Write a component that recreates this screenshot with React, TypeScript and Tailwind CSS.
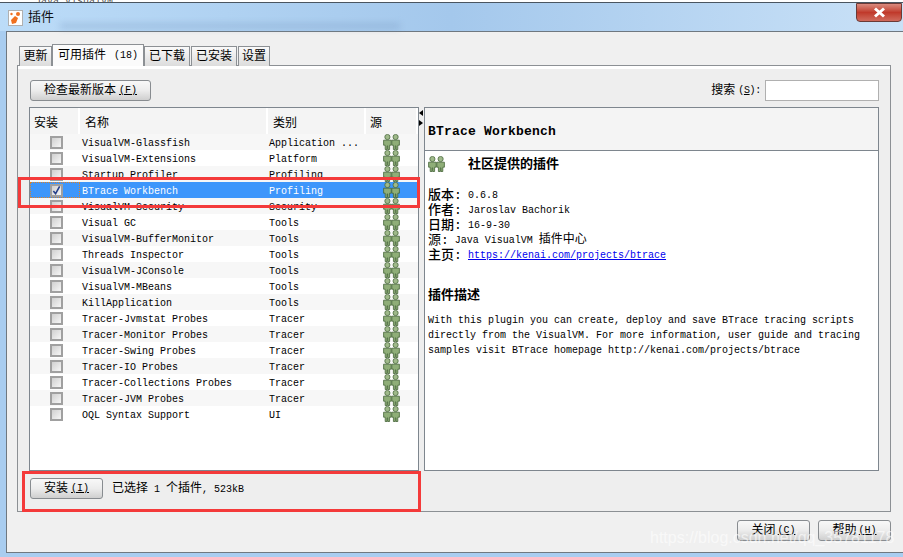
import React from "react";

const FONT = { fontFamily: '"Liberation Mono","Noto Sans CJK SC",monospace' };

function People({ className = "" }: { className?: string }) {
  const fig = (x: number) => (
    <g key={x}>
      <circle cx={x} cy={3} r={2.6} fill="#9fb98a" stroke="#4c6c40" strokeWidth={0.8} />
      <path
        d={`M${x - 3.8} 6.2 h7.6 v5 h-1.6 v4.3 h-1.9 v-3.6 h-0.6 v3.6 h-1.9 v-4.3 h-1.6 z`}
        fill="#8fae78"
        stroke="#456539"
        strokeWidth={0.8}
      />
    </g>
  );
  return (
    <svg width="17" height="16" viewBox="0 0 17 16" className={className}>
      {fig(4.4)}
      {fig(12.6)}
    </svg>
  );
}

function Check({ checked }: { checked?: boolean }) {
  return (
    <div className="relative h-[13px] w-[13px] border-2 border-[#a0a0a0] bg-gradient-to-br from-[#d0d0d0] to-[#f6f6f6]">
      {checked && (
        <svg viewBox="0 0 10 10" className="absolute left-0 top-0 h-[9px] w-[9px]">
          <path d="M1.5 5.5 L4 8.5 L8.5 0.5" fill="none" stroke="#27408b" strokeWidth="1.8" />
        </svg>
      )}
    </div>
  );
}

function Btn({ children, className = "" }: { children: React.ReactNode; className?: string }) {
  return (
    <div
      className={`flex h-[21px] items-center justify-center rounded-[3px] border border-[#888c90] bg-gradient-to-b from-[#f8f8f8] via-[#ececec] to-[#cfcfcf] text-[12px] text-black ${className}`}
    >
      {children}
    </div>
  );
}

const rows: [string, string][] = [
  ["VisualVM-Glassfish", "Application ..."],
  ["VisualVM-Extensions", "Platform"],
  ["Startup Profiler", "Profiling"],
  ["BTrace Workbench", "Profiling"],
  ["VisualVM-Security", "Security"],
  ["Visual GC", "Tools"],
  ["VisualVM-BufferMonitor", "Tools"],
  ["Threads Inspector", "Tools"],
  ["VisualVM-JConsole", "Tools"],
  ["VisualVM-MBeans", "Tools"],
  ["KillApplication", "Tools"],
  ["Tracer-Jvmstat Probes", "Tracer"],
  ["Tracer-Monitor Probes", "Tracer"],
  ["Tracer-Swing Probes", "Tracer"],
  ["Tracer-IO Probes", "Tracer"],
  ["Tracer-Collections Probes", "Tracer"],
  ["Tracer-JVM Probes", "Tracer"],
  ["OQL Syntax Support", "UI"],
];

function Tab({ label, className = "" }: { label: string; className?: string }) {
  return (
    <div
      className={`mt-[2px] flex h-[20px] items-center justify-center border border-b-0 border-[#8c9094] bg-gradient-to-b from-[#fafafa] to-[#dcdcdc] pt-[1px] text-[12px] ${className}`}
    >
      {label}
    </div>
  );
}

function Head({ label, className = "" }: { label: string; className?: string }) {
  return (
    <div className={`flex h-[26px] shrink-0 items-center border-r-2 border-white bg-[#f4f4f4] pt-[5px] text-[12px] ${className}`}>
      {label}
    </div>
  );
}

export default function App() {
  return (
    <div style={FONT} className="relative h-[557px] w-[903px] overflow-hidden bg-[#a9cdf0] text-black">
      {/* sliver of the window behind */}
      <div className="h-[2px] overflow-hidden bg-white pl-[35px] text-[10px] leading-[4px] text-[#555]">
        Java VisualVM
      </div>
      {/* title bar */}
      <div className="relative flex h-[29px] items-center border-t border-[#4a5560] bg-gradient-to-r from-[#bcdcf8] via-[#a4c8ec] to-[#c9e1f7] pl-[8px] pt-[2px]">
        <div className="flex h-[16px] w-[15px] items-center justify-center border border-[#b0b0b0] bg-white">
          <svg width="13" height="14" viewBox="0 0 13 14">
            <circle cx="9" cy="3" r="2" fill="#f07020" />
            <circle cx="2.5" cy="3" r="1.2" fill="#f07020" />
            <path d="M6 5 L9 7 L7 12 L3 13 L2 9 Z" fill="#f07020" />
          </svg>
        </div>
        <span className="ml-[5px] text-[13px] text-[#111]">插件</span>
        <div className="absolute bottom-[2px] left-[60px] h-[6px] w-[340px] bg-[#6f93b8]/30 blur-[3px]" />
      </div>
      <div className="absolute right-[1px] top-[3px] flex h-[19px] w-[46px] items-center justify-center rounded-b-[4px] border border-[#6b3a36] bg-gradient-to-b from-[#d98a7e] via-[#c0392b] to-[#cf6a5c]">
        <svg width="13" height="11" viewBox="0 0 13 11">
          <path d="M2 1.5 L11 9.5 M11 1.5 L2 9.5" stroke="#fff" strokeWidth="3" />
        </svg>
      </div>

      {/* window body */}
      <div className="ml-[6px] h-[522px] border-b border-l border-t border-[#6f7880] bg-[#f0f0f0] pl-[10px] pr-[12px] pt-[12px]">
        {/* tabs */}
        <div className="flex h-[22px] pl-[2px]">
          <Tab label="更新" className="w-[33px]" />
          <div className="relative z-10 flex h-[22px] w-[92px] items-center justify-center border border-b-0 border-[#8c9094] bg-[#fbfbfb] text-[12px]">
            可用插件 <span className="ml-[8px] text-[10px]">(18)</span>
          </div>
          <Tab label="已下载" className="w-[46px]" />
          <Tab label="已安装" className="ml-[1px] w-[46px]" />
          <Tab label="设置" className="ml-[1px] w-[32px]" />
        </div>

        {/* tab panel */}
        <div className="-mt-px h-[447px] border border-[#8c9094] bg-[#eeeeee]">
          <div className="h-[3px] bg-white" />
          {/* tools row */}
          <div className="mt-[11px] flex h-[21px] items-center justify-between pl-[12px] pr-[11px]">
            <Btn className="w-[121px]">
              检查最新版本 <span className="ml-[3px] text-[10px] underline">(F)</span>
            </Btn>
            <div className="flex items-center">
              <span className="text-[12px]">搜索</span>
              <span className="ml-[3px] text-[10px] tracking-[-0.3px]">(<span className="underline">S</span>):</span>
              <div className="ml-[4px] h-[21px] w-[114px] border border-[#b0b0b0] bg-white" />
            </div>
          </div>

          {/* split */}
          <div className="mx-[11px] mt-[6px] flex h-[364px]">
            {/* table */}
            <div className="w-[390px] shrink-0 overflow-hidden border border-[#7e868e] bg-white">
              <div className="flex bg-[#f4f4f4]">
                <Head label="安装" className="w-[50px] pl-[4px]" />
                <Head label="名称" className="w-[188px] pl-[5px]" />
                <Head label="类别" className="w-[98px] pl-[5px]" />
                <Head label="源" className="w-[52px] border-r-0 pl-[4px]" />
              </div>
              {rows.map(([name, cat], i) => {
                const sel = i === 3;
                return (
                  <div
                    key={name}
                    className={`flex h-[16px] items-center text-[10px] ${
                      sel ? "bg-[#3d96fb] text-white" : i % 2 === 0 ? "bg-[#f7f7f7]" : "bg-white"
                    }`}
                  >
                    <div
                      className={`flex h-[16px] w-[50px] shrink-0 items-center justify-center pl-[2px] ${
                        sel ? "border border-dotted border-[#d9822b]" : ""
                      }`}
                    >
                      <Check checked={sel} />
                    </div>
                    <div className="w-[188px] shrink-0 whitespace-pre pl-[2px] pt-[3px]">{name}</div>
                    <div className="w-[98px] shrink-0 whitespace-pre pl-[1px] pt-[3px]">{cat}</div>
                    <div className="flex w-[52px] items-center pl-[17px]">
                      <People />
                    </div>
                  </div>
                );
              })}
            </div>

            {/* splitter */}
            <div className="flex w-[5px] shrink-0 flex-col bg-[#eeeeee] pt-[3px]">
              <span className="h-0 w-0 border-y-[3px] border-r-[4px] border-y-transparent border-r-black" />
              <span className="mt-[4px] h-0 w-0 border-y-[3px] border-l-[4px] border-y-transparent border-l-black" />
            </div>

            {/* details */}
            <div className="flex-1 border border-[#7e868e] bg-white">
              <div className="flex h-[43px] items-center border-b border-[#7e868e] bg-[#f4f4f4] pl-[3px] pt-[6px] text-[13px] font-bold tracking-[0.2px]">
                BTrace Workbench
              </div>
              <div className="pl-[3px] pt-[3px] text-[10px]">
                <div className="flex h-[20px] items-center">
                  <People />
                  <span className="ml-[23px] mt-[2px] text-[13px] font-bold">社区提供的插件</span>
                </div>
                <div className="mt-[14px] leading-[15px]">
                  <div className="flex h-[15px] items-center">
                    <span className="w-[40px] text-[13px] font-medium">版本:</span>0.6.8
                  </div>
                  <div className="flex h-[15px] items-center">
                    <span className="w-[40px] text-[13px] font-medium">作者:</span>Jaroslav Bachorik
                  </div>
                  <div className="flex h-[15px] items-center">
                    <span className="w-[40px] text-[13px] font-medium">日期:</span>16-9-30
                  </div>
                  <div className="flex h-[15px] items-center whitespace-pre">
                    <span className="text-[13px]">源:</span> Java VisualVM <span className="text-[12px]">插件中心</span>
                  </div>
                  <div className="flex h-[15px] items-center">
                    <span className="w-[40px] text-[13px] font-medium">主页:</span>
                    <span className="text-[#0000ee] underline">https://kenai.com/projects/btrace</span>
                  </div>
                </div>
                <div className="mt-[24px] text-[13px] font-bold leading-[18px]">插件描述</div>
                <div className="mt-[8px] whitespace-pre leading-[15px]">
                  {"With this plugin you can create, deploy and save BTrace tracing scripts\ndirectly from the VisualVM. For more information, user guide and tracing\nsamples visit BTrace homepage http://kenai.com/projects/btrace"}
                </div>
              </div>
            </div>
          </div>

          {/* install row */}
          <div className="ml-[12px] mt-[7px] flex h-[21px] items-center">
            <Btn className="w-[73px]">
              安装 <span className="ml-[3px] text-[10px] underline">(I)</span>
            </Btn>
            <span className="ml-[9px] whitespace-pre text-[10px]">
              <span className="text-[12px]">已选择</span> 1 <span className="text-[12px]">个插件</span>, 523kB
            </span>
          </div>
        </div>

        {/* footer */}
        <div className="mt-[8px] flex justify-end gap-[8px]">
          <Btn className="w-[73px]">
            关闭 <span className="ml-[2px] text-[10px] underline">(C)</span>
          </Btn>
          <Btn className="w-[73px]">
            帮助 <span className="ml-[2px] text-[10px] underline">(H)</span>
          </Btn>
        </div>
      </div>

      {/* annotations */}
      <div className="absolute left-[18px] top-[177px] h-[31px] w-[402px] border-[3px] border-[#f43a3a]" />
      <div className="absolute left-[22px] top-[471px] h-[41px] w-[399px] border-[3px] border-[#f43a3a]" />
      {/* watermark */}
      <div
        style={{ fontFamily: '"Liberation Sans",sans-serif' }}
        className="absolute left-[650px] top-[529px] whitespace-pre text-[16px] leading-[18px] text-white/60"
      >
        https://blog.csdn.net/qq_35781178
      </div>
    </div>
  );
}
